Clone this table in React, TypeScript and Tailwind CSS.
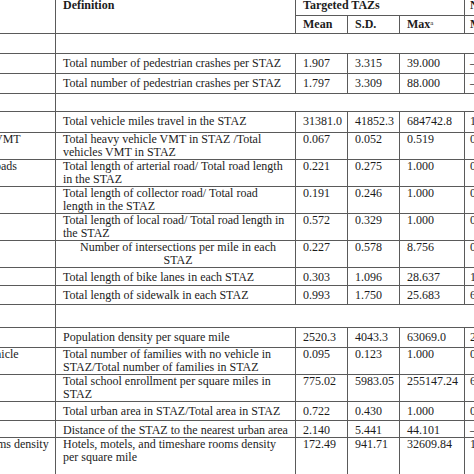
import React from 'react';

type DataRow = {
  kind: 'data';
  h: string;
  label?: string;
  shift?: string;
  def: string[];
  mean: string;
  sd: string;
  max: string;
  next: string;
  center?: boolean;
};

type SectionRow = { kind: 'section'; h: string };

type Row = DataRow | SectionRow;

const rows: Row[] = [
  { kind: 'section', h: 'h-[20px]' },
  { kind: 'data', h: 'h-[20px]', def: ['Total number of pedestrian crashes per STAZ'], mean: '1.907', sd: '3.315', max: '39.000', next: '–' },
  { kind: 'data', h: 'h-[20px]', def: ['Total number of pedestrian crashes per STAZ'], mean: '1.797', sd: '3.309', max: '88.000', next: '–' },
  { kind: 'section', h: 'h-[18px]' },
  { kind: 'data', h: 'h-[21px]', def: ['Total vehicle miles travel in the STAZ'], mean: '31381.0', sd: '41852.3', max: '684742.8', next: '1' },
  { kind: 'data', h: 'h-[27px]', label: 'VMT', shift: '-ml-[7px]', def: ['Total heavy vehicle VMT in STAZ /Total', 'vehicles VMT in STAZ'], mean: '0.067', sd: '0.052', max: '0.519', next: '0' },
  { kind: 'data', h: 'h-[27px]', label: 'roads', shift: '-ml-[10px]', def: ['Total length of arterial road/ Total road length', 'in the STAZ'], mean: '0.221', sd: '0.275', max: '1.000', next: '0' },
  { kind: 'data', h: 'h-[27px]', def: ['Total length of collector road/ Total road', 'length in the STAZ'], mean: '0.191', sd: '0.246', max: '1.000', next: '0' },
  { kind: 'data', h: 'h-[27px]', def: ['Total length of local road/ Total road length in', 'the STAZ'], mean: '0.572', sd: '0.329', max: '1.000', next: '0' },
  { kind: 'data', h: 'h-[27px]', def: ['Number of intersections per mile in each', 'STAZ'], mean: '0.227', sd: '0.578', max: '8.756', next: '0', center: true },
  { kind: 'data', h: 'h-[18px]', def: ['Total length of bike lanes in each STAZ'], mean: '0.303', sd: '1.096', max: '28.637', next: '1' },
  { kind: 'data', h: 'h-[19px]', def: ['Total length of sidewalk in each STAZ'], mean: '0.993', sd: '1.750', max: '25.683', next: '6' },
  { kind: 'section', h: 'h-[23px]' },
  { kind: 'data', h: 'h-[20px]', def: ['Population density per square mile'], mean: '2520.3', sd: '4043.3', max: '63069.0', next: '2' },
  { kind: 'data', h: 'h-[27px]', label: 'vehicle', shift: '-ml-[17px]', def: ['Total number of families with no vehicle in', 'STAZ/Total number of families in STAZ'], mean: '0.095', sd: '0.123', max: '1.000', next: '0' },
  { kind: 'data', h: 'h-[27px]', def: ['Total school enrollment per square miles in', 'STAZ'], mean: '775.02', sd: '5983.05', max: '255147.24', next: '6' },
  { kind: 'data', h: 'h-[19px]', def: ['Total urban area in STAZ/Total area in STAZ'], mean: '0.722', sd: '0.430', max: '1.000', next: '0' },
  { kind: 'data', h: 'h-[17px]', def: ['Distance of the STAZ to the nearest urban area'], mean: '2.140', sd: '5.441', max: '44.101', next: '–' },
  { kind: 'data', h: 'h-[60px]', label: 'rooms density', shift: '-ml-[20px]', def: ['Hotels, motels, and timeshare rooms density', 'per square mile'], mean: '172.49', sd: '941.71', max: '32609.84', next: '1' },
];

const border = 'border border-[#5a5a5a]';
const cell = `${border} align-top pl-[7px] pr-[2px] whitespace-nowrap`;
const nextCell = `${border} align-top pl-[5px] whitespace-nowrap`;

export default function App() {
  return (
    <div className="w-[474px] h-[474px] overflow-hidden bg-white text-[#1c1c1c] font-['Liberation_Serif',serif] text-[12px] leading-[13px]">
      <table className="-ml-[45px] -mt-[5px] border-collapse table-fixed w-[569px]">
        <colgroup>
          <col className="w-[100px]" />
          <col className="w-[240px]" />
          <col className="w-[52px]" />
          <col className="w-[52px]" />
          <col className="w-[65px]" />
          <col className="w-[60px]" />
        </colgroup>
        <thead>
          <tr className="h-[20px]">
            <th rowSpan={2} className={border} />
            <th rowSpan={2} className={`${cell} pt-[3px] text-left font-bold`}>Definition</th>
            <th colSpan={3} className={`${cell} pt-[3px] text-left font-bold`}>Targeted TAZs</th>
            <th className={`${nextCell} pt-[3px] text-left font-bold`}>Non-targeted TAZs</th>
          </tr>
          <tr className="h-[18px]">
            <th className={`${cell} pt-[2px] text-left font-bold`}>Mean</th>
            <th className={`${cell} pt-[2px] text-left font-bold`}>S.D.</th>
            <th className={`${cell} pt-[2px] text-left font-bold`}>
              Max<sup className="text-[7px] font-normal">a</sup>
            </th>
            <th className={`${nextCell} pt-[2px] text-left font-bold`}>Mean</th>
          </tr>
        </thead>
        <tbody>
          {rows.map((r, i) => {
            if (r.kind === 'section') {
              return (
                <tr key={i} className={r.h}>
                  <td className={border} />
                  <td colSpan={5} className={border} />
                </tr>
              );
            }
            const pad = r.def.length > 1 ? 'pt-0' : 'pt-[3px]';
            return (
              <tr key={i} className={r.h}>
                <td className={`${cell} ${pad} pl-[45px]`}>
                  {r.label && <span className={`inline-block ${r.shift}`}>{r.label}</span>}
                </td>
                <td className={`${cell} ${pad} ${r.center ? 'text-center pl-0' : ''}`}>
                  {r.def.map((line, j) => (
                    <div key={j}>{line}</div>
                  ))}
                </td>
                <td className={`${cell} ${pad}`}>{r.mean}</td>
                <td className={`${cell} ${pad}`}>{r.sd}</td>
                <td className={`${cell} ${pad}`}>{r.max}</td>
                <td className={`${nextCell} ${pad}`}>{r.next}</td>
              </tr>
            );
          })}
        </tbody>
      </table>
    </div>
  );
}
